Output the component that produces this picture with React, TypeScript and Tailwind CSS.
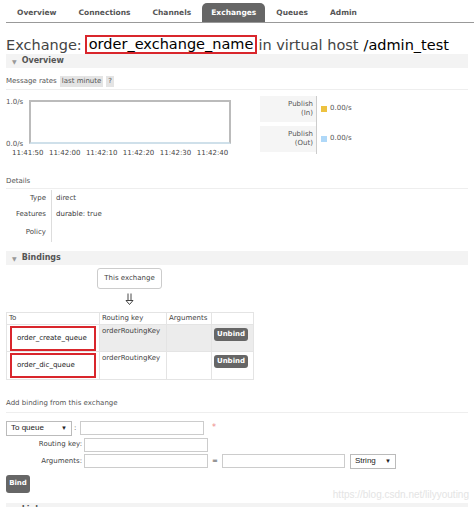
const tabs = ['Overview', 'Connections', 'Channels', 'Exchanges', 'Queues', 'Admin']
const xLabels = ['11:41:50', '11:42:00', '11:42:10', '11:42:20', '11:42:30', '11:42:40']

function SectionHeader({ title }: { title: string }) {
  return (
    <div className="flex items-center gap-[5px] bg-[#f3f3f3] px-[6px] h-[14px] text-[8px] font-bold text-[#555]">
      <span className="text-[6px] text-[#999]">▼</span>
      {title}
    </div>
  )
}

function Select({ label, width }: { label: string; width: string }) {
  return (
    <div
      className={`flex items-center justify-between border border-[#bbb] bg-white px-[4px] h-[15px] text-[8px] text-[#222] font-['Liberation_Sans'] ${width}`}
    >
      {label}
      <span className="text-[6px]">▼</span>
    </div>
  )
}

function Input({ width }: { width: string }) {
  return <div className={`h-[14px] border border-[#ccc] bg-white ${width}`} />
}

function DoubleArrowDown() {
  return (
    <svg width="9" height="12" viewBox="0 0 9 12" fill="none" stroke="#333" strokeWidth="0.9">
      <path d="M3 0.5 V7.5 M6 0.5 V7.5 M1 7.5 H8 L4.5 11.5 Z" />
    </svg>
  )
}

export default function App() {
  return (
    <div className="relative w-[474px] h-[507px] overflow-hidden bg-white font-['DejaVu_Sans',sans-serif] text-[#484848]">
      {/* tabs */}
      <div className="flex items-end h-[23px] border-b border-[#999] ml-[6px]">
        {tabs.map((t) => (
          <div
            key={t}
            className={
              t === 'Exchanges'
                ? 'h-[19px] px-[9px] flex items-center rounded-t-[5px] bg-[#666] text-white text-[7.5px] font-bold'
                : 'h-[19px] px-[11px] flex items-center text-[7.5px] font-bold text-[#555]'
            }
          >
            {t}
          </div>
        ))}
      </div>

      {/* title */}
      <div className="flex items-center whitespace-nowrap px-[6px] pt-[12px] text-[14.5px] leading-[18px] text-[#444]">
        <span>Exchange:</span>
        <span className="ml-[3px] border-2 border-[#d9262c] px-[2px] text-black leading-[15px]">
          order_exchange_name
        </span>
        <span className="ml-[1px]">in virtual host</span>
        <span className="ml-[5px] text-black">/admin_test</span>
      </div>

      <div className="mx-[6px]">
        <SectionHeader title="Overview" />

        <div className="mt-[8px] flex items-center gap-[3px] text-[7px] text-[#555] border-b border-[#eee] pb-[2px]">
          Message rates
          <span className="bg-[#e4e4e4] px-[2px]">last minute</span>
          <span className="bg-[#e4e4e4] px-[2px]">?</span>
        </div>

        {/* chart + legend */}
        <div className="flex mt-[9px]">
          <div className="w-[240px]">
            <div className="flex">
              <div className="flex flex-col justify-between w-[22px] h-[46px] text-[7px] text-[#555] leading-[8px]">
                <span className="mt-[-1px]">1.0/s</span>
                <span className="mb-[-3px]">0.0/s</span>
              </div>
              <div className="ml-[1px] w-[202px] h-[44px] mt-[1px] border-2 border-[#bbb] border-b-[#cfe0ea]" />
            </div>
            <div className="mt-[3px] flex gap-[5.5px] pl-[6px] text-[7px] text-[#444] leading-[10px]">
              {xLabels.map((l) => (
                <span key={l}>{l}</span>
              ))}
            </div>
          </div>
          <div className="ml-[14px] mt-[-3px] flex flex-col gap-[4px] w-[56px]">
            <div className="h-[26px] bg-[#f5f5f5] flex flex-col items-end justify-center pr-[3px] text-[7px] leading-[9px] text-[#555]">
              <span>Publish</span>
              <span>(In)</span>
            </div>
            <div className="h-[26px] bg-[#f5f5f5] flex flex-col items-end justify-center pr-[3px] text-[7px] leading-[9px] text-[#555]">
              <span>Publish</span>
              <span>(Out)</span>
            </div>
          </div>
          <div className="mt-[-3px] h-[58px] border-l border-[#ccc] pl-[4px] flex flex-col gap-[4px]">
            <div className="h-[26px] flex items-center gap-[3px] text-[7px] text-[#555]">
              <span className="w-[6px] h-[6px] bg-[#edc240]" />
              0.00/s
            </div>
            <div className="h-[26px] flex items-center gap-[3px] text-[7px] text-[#555]">
              <span className="w-[6px] h-[6px] bg-[#afd8f8]" />
              0.00/s
            </div>
          </div>
        </div>

        {/* details */}
        <div className="mt-[18px] text-[7px] text-[#555] border-b border-[#eee] pb-[2px]">Details</div>
        <div className="flex mt-[1px] text-[7px] text-[#444]">
          <div className="w-[46px] flex flex-col items-end pr-[5px] border-r border-[#ddd] leading-[16px] pb-[2px]">
            <span>Type</span>
            <span>Features</span>
            <span className="mt-[2px]">Policy</span>
          </div>
          <div className="pl-[4px] flex flex-col leading-[16px]">
            <span>direct</span>
            <span>
              <span className="text-[#333]">durable:</span> true
            </span>
          </div>
        </div>

        <div className="mt-[9px]">
          <SectionHeader title="Bindings" />
        </div>

        <div className="flex flex-col items-start">
          <div className="ml-[91px] mt-[3px] h-[21px] w-[65px] flex items-center justify-center border border-[#ccc] rounded-[3px] text-[7px] text-[#444]">
            This exchange
          </div>
          <div className="ml-[119px] mt-[4px]">
            <DoubleArrowDown />
          </div>
        </div>

        {/* bindings table */}
        <table className="mt-[7px] border-collapse text-[7px] text-[#444]">
          <thead>
            <tr className="h-[12px]">
              <th className="w-[93px] border border-[#e4e4e4] text-left font-normal pl-[2px]">To</th>
              <th className="w-[67px] border border-[#e4e4e4] text-left font-normal pl-[2px]">Routing key</th>
              <th className="w-[45px] border border-[#e4e4e4] text-left font-normal pl-[2px]">Arguments</th>
              <th className="w-[42px] border border-[#e4e4e4]" />
            </tr>
          </thead>
          <tbody>
            {['order_create_queue', 'order_dic_queue'].map((q, i) => (
              <tr key={q} className={i === 0 ? 'h-[27px] bg-[#ececec]' : 'h-[28px] bg-white'}>
                <td className="border border-[#e4e4e4] bg-white px-[3px]">
                  <div className="h-[25px] flex items-center border-2 border-[#d9262c] pl-[5px] text-[#222]">{q}</div>
                </td>
                <td className="border border-[#e4e4e4] align-top pl-[2px] pt-[1px]">orderRoutingKey</td>
                <td className="border border-[#e4e4e4]" />
                <td className="border border-[#e4e4e4] align-top pt-[3px] pl-[2px]">
                  <div className="w-[34px] h-[13px] flex items-center justify-center rounded-[3px] bg-[#666] text-white font-bold">
                    Unbind
                  </div>
                </td>
              </tr>
            ))}
          </tbody>
        </table>

        {/* add binding */}
        <div className="mt-[18px] text-[7px] text-[#555] border-b border-[#eee] pb-[3px]">
          Add binding from this exchange
        </div>
        <div className="mt-[8px] flex flex-col gap-[2px] text-[7px] text-[#444]">
          <div className="flex items-center">
            <div className="w-[74px] flex items-center">
              <Select label="To queue" width="w-[66px]" />
              <span className="ml-[2px]">:</span>
            </div>
            <Input width="w-[124px]" />
            <span className="ml-[8px] text-[#e88] text-[8px]">*</span>
          </div>
          <div className="flex items-center">
            <span className="w-[78px] text-right pr-[2px]">Routing key:</span>
            <Input width="w-[124px]" />
          </div>
          <div className="flex items-center">
            <span className="w-[78px] text-right pr-[2px]">Arguments:</span>
            <Input width="w-[124px]" />
            <span className="mx-[4px]">=</span>
            <Input width="w-[123px]" />
            <div className="ml-[5px]">
              <Select label="String" width="w-[46px]" />
            </div>
          </div>
          <div className="mt-[4px] w-[24px] h-[18px] flex items-center justify-center rounded-[3px] bg-[#666] text-white font-bold">
            Bind
          </div>
        </div>

        <div className="mt-[10px]">
          <SectionHeader title="Links" />
        </div>
      </div>

      <span className="absolute right-[5px] bottom-[5px] text-[10px] text-[#e4e4e4] font-['Liberation_Sans']">
        https://blog.csdn.net/lilyyouting
      </span>
    </div>
  )
}
